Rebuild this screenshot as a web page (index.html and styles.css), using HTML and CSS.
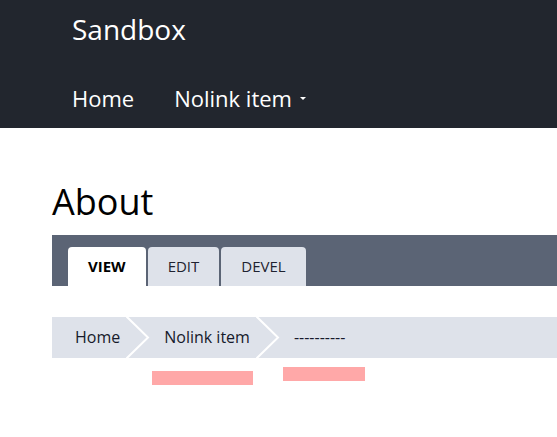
FILE: index.html
```html
<!DOCTYPE html>
<html lang="en">
<head>
<meta charset="utf-8">
<title>About | Sandbox</title>
<link rel="stylesheet" href="styles.css">
</head>
<body>
<header class="site-header">
  <div class="brand">Sandbox</div>
  <nav class="main-nav">
    <a class="nav-link" href="#">Home</a>
    <span class="nav-link dropdown">Nolink item<span class="caret"></span></span>
  </nav>
</header>
<main class="content">
  <h1 class="page-title">About</h1>
  <div class="tabs">
    <a class="tab active" href="#">View</a>
    <a class="tab" href="#">Edit</a>
    <a class="tab" href="#">Devel</a>
  </div>
  <ol class="breadcrumb">
    <li class="crumb crumb-first">Home</li>
    <li class="sep"><svg width="24" height="41" viewBox="0 0 24 41"><polyline points="0,-1 22,20.5 0,42" fill="none" stroke="#ffffff" stroke-width="2"/></svg></li>
    <li class="crumb">Nolink item</li>
    <li class="sep"><svg width="24" height="41" viewBox="0 0 24 41"><polyline points="0,-1 22,20.5 0,42" fill="none" stroke="#ffffff" stroke-width="2"/></svg></li>
    <li class="crumb">----------</li>
  </ol>
  <div class="marks">
    <span class="mark mark-one"></span>
    <span class="mark mark-two"></span>
  </div>
</main>
</body>
</html>
```
FILE: styles.css
```css
html, body {
  margin: 0;
  padding: 0;
  background: #ffffff;
  font-family: "Open Sans", "Liberation Sans", sans-serif;
  overflow: hidden;
}

.site-header {
  background: #22262e;
  height: 128px;
  box-sizing: border-box;
  padding-left: 72px;
  color: #ffffff;
}

.brand {
  font-size: 28px;
  line-height: 58px;
}

.main-nav {
  display: flex;
  margin-top: 20px;
  font-size: 22px;
  line-height: 40px;
}

.nav-link {
  color: #ffffff;
  text-decoration: none;
  margin-right: 40px;
  display: flex;
  align-items: center;
}

.caret {
  display: inline-block;
  width: 0;
  height: 0;
  border-top: 3px solid #ffffff;
  border-left: 3.5px solid transparent;
  border-right: 3.5px solid transparent;
  margin-left: 8px;
}

.content {
  margin-left: 52px;
}

.page-title {
  margin: 52px 0 0 0;
  font-size: 36px;
  font-weight: 400;
  line-height: 1.2;
  color: #000000;
}

.tabs {
  margin-top: 12px;
  background: #5b6475;
  padding: 12px 0 0 16px;
  display: flex;
  gap: 2px;
}

.tab {
  display: block;
  padding: 0 20px;
  height: 39px;
  line-height: 39px;
  font-size: 15px;
  text-transform: uppercase;
  color: #1f2230;
  text-decoration: none;
  background: #dee2ea;
  border-radius: 4px 4px 0 0;
}

.tab.active {
  background: #ffffff;
  font-weight: 700;
  color: #000000;
}

.breadcrumb {
  list-style: none;
  margin: 31px 0 0 0;
  padding: 0 0 0 23px;
  height: 41px;
  background: #dee2ea;
  display: flex;
  align-items: center;
  font-size: 16px;
  line-height: 41px;
  color: #161a2b;
}

.sep {
  display: flex;
  height: 41px;
}

.sep svg {
  display: block;
}

.crumb {
  white-space: nowrap;
}

.crumb-first {
  margin-right: 6px;
}

.sep + .crumb {
  margin-left: -8px;
  padding-left: 22px;
  margin-right: 6px;
}

.marks {
  display: flex;
  align-items: flex-start;
  margin-top: 9px;
}

.mark {
  display: block;
  height: 14px;
  background: #ffa8a8;
}

.mark-one {
  width: 101px;
  margin-left: 100px;
  margin-top: 4px;
}

.mark-two {
  width: 82px;
  margin-left: 30px;
}
```
